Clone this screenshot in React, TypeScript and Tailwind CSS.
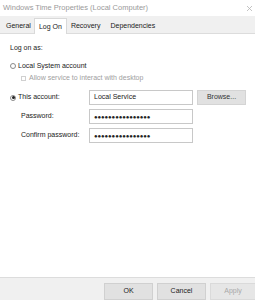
import React from 'react';

const font = { fontFamily: '"Liberation Sans", Arial, sans-serif' };

const Radio: React.FC<{ checked?: boolean }> = ({ checked }) => (
    <span className="w-[6px] h-[6px] rounded-full border border-[#8a8a8a] bg-white flex items-center justify-center shrink-0">
        {checked && <span className="w-[3px] h-[3px] rounded-full bg-[#222]" />}
    </span>
);

const Field: React.FC<{ children: React.ReactNode }> = ({ children }) => (
    <div className="w-[104px] h-[15px] border border-[#c8c8c8] bg-white flex items-center pl-[4px] text-[7px] text-[#222]">
        {children}
    </div>
);

const dots = '●●●●●●●●●●●●●●●●';

export default function App() {
    return (
        <div className="w-[255px] h-[300px] flex flex-col bg-white overflow-hidden text-[#222]" style={font}>
            {/* Title bar */}
            <div className="h-[16px] flex items-center justify-between pl-[3px] pr-[2px] bg-white">
                <span className="text-[7.5px] text-[#9a9a9a] whitespace-nowrap">Windows Time Properties (Local Computer)</span>
                <svg width="5" height="5" viewBox="0 0 5 5" className="mr-[1px]">
                    <path d="M0 0L5 5M5 0L0 5" stroke="#b5b5b5" strokeWidth="0.8" />
                </svg>
            </div>

            {/* Tabs */}
            <div className="h-[18px] bg-[#f0f0f0] flex items-end pl-[3px] text-[7px] border-b border-[#dcdcdc]">
                <div className="h-[13px] px-[3px] flex items-center">General</div>
                <div className="h-[16px] px-[4px] flex items-start pt-[3px] bg-white border border-b-0 border-[#d9d9d9] -mb-[1px]">Log On</div>
                <div className="h-[13px] px-[4px] flex items-center">Recovery</div>
                <div className="h-[13px] px-[4px] flex items-center ml-[2px]">Dependencies</div>
            </div>

            {/* Panel */}
            <div className="flex-1 bg-white border-b border-[#dcdcdc] pl-[10px] text-[7px]">
                <div className="mt-[9px] leading-[10px]">Log on as:</div>

                <div className="mt-[8px] flex items-center gap-[2px] leading-[10px]">
                    <Radio />
                    <span>Local System account</span>
                </div>
                <div className="mt-[2px] ml-[11px] flex items-center gap-[3px] leading-[10px] text-[#a0a0a0]">
                    <span className="w-[5px] h-[5px] border border-[#d0d0d0] bg-white shrink-0" />
                    <span>Allow service to interact with desktop</span>
                </div>

                <div className="mt-[7px] flex flex-col gap-[4px]">
                    <div className="flex items-center h-[15px]">
                        <div className="w-[79px] flex items-center gap-[2px]">
                            <Radio checked />
                            <span>This account:</span>
                        </div>
                        <Field>Local Service</Field>
                        <button className="ml-[4px] w-[49px] h-[15px] bg-[#e1e1e1] border border-[#d4d4d4] text-[7px] text-[#333]">Browse...</button>
                    </div>
                    <div className="flex items-center h-[15px]">
                        <div className="w-[79px] pl-[11px]">Password:</div>
                        <Field><span className="text-[6px] leading-none tracking-[-0.1px]">{dots}</span></Field>
                    </div>
                    <div className="flex items-center h-[15px]">
                        <div className="w-[79px] pl-[11px]">Confirm password:</div>
                        <Field><span className="text-[6px] leading-none tracking-[-0.1px]">{dots}</span></Field>
                    </div>
                </div>
            </div>

            {/* Bottom buttons */}
            <div className="h-[22px] bg-[#f0f0f0] flex items-start justify-end gap-[4px] pt-[5px] text-[7px]">
                <button className="w-[49px] h-[17px] bg-[#e1e1e1] border border-[#d0d0d0] text-[#222]">OK</button>
                <button className="w-[49px] h-[17px] bg-[#e1e1e1] border border-[#d0d0d0] text-[#222]">Cancel</button>
                <button className="w-[45px] h-[17px] bg-[#e6e6e6] border border-[#dadada] border-r-0 text-[#a8a8a8]">Apply</button>
            </div>
        </div>
    );
}
